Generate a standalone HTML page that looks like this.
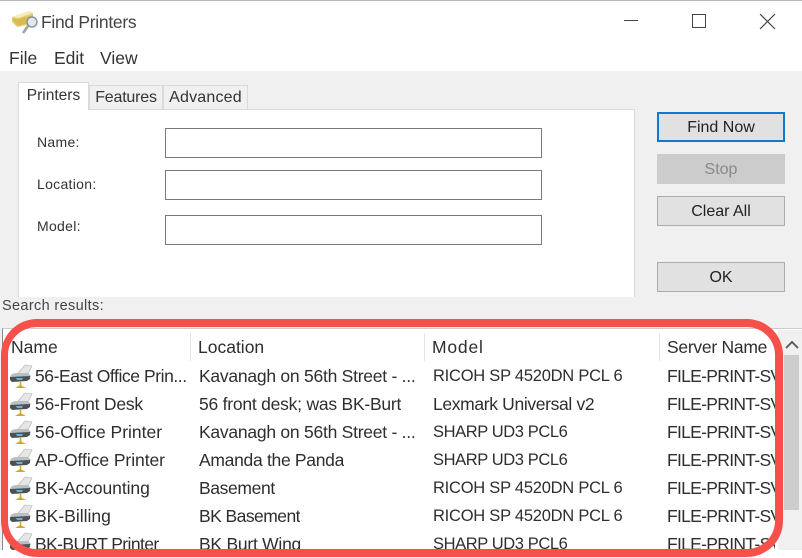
<!DOCTYPE html>
<html>
<head>
<meta charset="utf-8">
<style>
html,body{margin:0;padding:0}
body{width:802px;height:558px;position:relative;overflow:hidden;background:#f0f0f0;font-family:"Liberation Sans",sans-serif;color:#333}
#w{position:absolute;left:0;top:0;width:802px;height:558px;filter:blur(.35px)}
.a{position:absolute;white-space:nowrap}
.btn{position:absolute;left:657px;width:128px;box-sizing:border-box;background:#e1e1e1;border:1px solid #adadad;text-align:center;font-size:16px;color:#222;height:30px;line-height:30px}
.inp{position:absolute;left:165px;width:377px;height:30px;box-sizing:border-box;background:#fff;border:1px solid #7a7a7a}
.lbl{position:absolute;left:37px;font-size:14px;color:#333;line-height:16px;letter-spacing:.3px}
.tab{position:absolute;text-align:center;font-size:16px;box-sizing:border-box;border:1px solid #dadada;border-bottom:0}
.c{position:absolute;font-size:17.5px;line-height:22px;white-space:nowrap;color:#2e2e2e;overflow:hidden}
.sv{left:667px;width:108px;letter-spacing:-.7px}
.rm{font-size:16.5px;letter-spacing:-.24px}
.sh{font-size:16.5px;letter-spacing:-.4px}
.sep{position:absolute;top:333px;width:1px;height:28px;background:#e5e5e5}
</style>
</head>
<body>
<div id="w">
<div class="a" style="left:0;top:0;width:802px;height:71px;background:#fff;border-top:1px solid #bbb;box-sizing:border-box"></div>
<svg class="a" style="left:9px;top:7px" width="32" height="30" viewBox="0 0 32 30">
<path d="M3 10 L20 4 L24 6 L24 17 L8 20 L3 15Z" fill="#e5d27a"/>
<path d="M4 10 L20 4 L23 6 L9 11Z" fill="#f6eebc"/>
<path d="M4 11 L9 12 L24 8 L24 15 L9 19 L4 14Z" fill="#d9bb55"/>
<circle cx="23" cy="15" r="5" fill="#dfe9ef" stroke="#7e8a94" stroke-width="1.3"/>
<path d="M19 19 L14 26" stroke="#a2a2a2" stroke-width="2.5"/>
</svg>
<div class="a" style="left:41px;top:11px;font-size:17.5px;line-height:22px;color:#444;letter-spacing:-.3px">Find Printers</div>
<div class="a" style="left:9px;top:47px;font-size:17.5px;line-height:22px;color:#333">File</div>
<div class="a" style="left:54px;top:47px;font-size:17.5px;line-height:22px;color:#333">Edit</div>
<div class="a" style="left:100px;top:47px;font-size:17.5px;line-height:22px;color:#333">View</div>

<div class="a" style="left:624px;top:20px;width:14px;height:1px;background:#444"></div>
<div class="a" style="left:692px;top:14px;width:14px;height:14px;box-sizing:border-box;border:1px solid #444"></div>
<svg class="a" style="left:759px;top:13px" width="17" height="17" viewBox="0 0 17 17"><path d="M1 1 L16 16 M16 1 L1 16" stroke="#444" stroke-width="1.2" fill="none"/></svg>

<div class="a" style="left:18px;top:109px;width:617px;height:188px;box-sizing:border-box;background:#fff;border:1px solid #dadada;border-bottom:0"></div>
<div class="tab" style="left:89px;top:85px;width:74px;height:24px;line-height:24px;background:#f0f0f0;letter-spacing:-.2px">Features</div>
<div class="tab" style="left:163px;top:85px;width:85px;height:24px;line-height:24px;background:#f0f0f0;letter-spacing:.2px">Advanced</div>
<div class="tab" style="left:18px;top:82px;width:71px;height:28px;line-height:25px;background:#fff;font-size:15.5px">Printers</div>

<div class="lbl" style="top:134px">Name:</div>
<div class="lbl" style="top:176px">Location:</div>
<div class="lbl" style="top:218px">Model:</div>
<div class="inp" style="top:128px"></div>
<div class="inp" style="top:170px"></div>
<div class="inp" style="top:215px"></div>

<div class="btn" style="top:112px;border:2px solid #0f78d0;line-height:28px">Find Now</div>
<div class="btn" style="top:154px;background:#ccc;border-color:#ccc;color:#8a8a8a">Stop</div>
<div class="btn" style="top:196px">Clear All</div>
<div class="btn" style="top:262px">OK</div>

<div class="a" style="left:2px;top:297px;font-size:14.5px;line-height:18px;color:#444;letter-spacing:.35px">Search results:</div>

<div class="a" style="left:2px;top:328px;width:800px;height:230px;background:#fff;border-left:1px solid #888;border-top:1px solid #ccc;box-sizing:border-box"></div>
<div class="sep" style="left:190px"></div>
<div class="sep" style="left:424px"></div>
<div class="sep" style="left:659px"></div>
<div class="c" style="left:11px;top:336px">Name</div>
<div class="c" style="left:198px;top:336px">Location</div>
<div class="c" style="left:432px;top:336px;letter-spacing:.8px">Model</div>
<div class="c" style="left:667px;top:336px;letter-spacing:-.27px">Server Name</div>

<svg width="0" height="0" style="position:absolute"><defs>
<g id="p">
<path d="M9 9 L16 1 L23 2 L19 10Z" fill="#e6e6e6" stroke="#b4b4b4" stroke-width=".6"/>
<path d="M1 13 Q2 9 8 9 L19 9 L22 12 L21 14 L2 15Z" fill="#b9bfc3"/>
<path d="M1 13 L21 12 L21 15 L18 17 L3 18 L1 16Z" fill="#4a5258"/>
<path d="M7 14 L14 14 L13 16 L8 16Z" fill="#6fb0c2"/>
<path d="M11.5 18 L11.5 22" stroke="#d9a520" stroke-width="1.6"/>
<path d="M6 24 L11.5 21 L17 24Z" fill="#d9a520"/>
</g></defs></svg>

<svg class="a" style="left:9px;top:364px" width="24" height="25"><use href="#p"/></svg>
<svg class="a" style="left:9px;top:392px" width="24" height="25"><use href="#p"/></svg>
<svg class="a" style="left:9px;top:420px" width="24" height="25"><use href="#p"/></svg>
<svg class="a" style="left:9px;top:448px" width="24" height="25"><use href="#p"/></svg>
<svg class="a" style="left:9px;top:476px" width="24" height="25"><use href="#p"/></svg>
<svg class="a" style="left:9px;top:504px" width="24" height="25"><use href="#p"/></svg>
<svg class="a" style="left:9px;top:532px" width="24" height="25"><use href="#p"/></svg>

<div class="c" style="left:35px;top:365px;letter-spacing:-.43px">56-East Office Prin...</div>
<div class="c" style="left:199px;top:365px;letter-spacing:-.25px">Kavanagh on 56th Street - ...</div>
<div class="c rm" style="left:433px;top:365px">RICOH SP 4520DN PCL 6</div>
<div class="c sv" style="top:365px">FILE-PRINT-SVR</div>

<div class="c" style="left:35px;top:393px;letter-spacing:-.23px">56-Front Desk</div>
<div class="c" style="left:199px;top:393px;letter-spacing:-.23px">56 front desk; was BK-Burt</div>
<div class="c" style="left:433px;top:393px;letter-spacing:-.35px">Lexmark Universal v2</div>
<div class="c sv" style="top:393px">FILE-PRINT-SVR</div>

<div class="c" style="left:35px;top:421px">56-Office Printer</div>
<div class="c" style="left:199px;top:421px;letter-spacing:-.25px">Kavanagh on 56th Street - ...</div>
<div class="c sh" style="left:433px;top:421px">SHARP UD3 PCL6</div>
<div class="c sv" style="top:421px">FILE-PRINT-SVR</div>

<div class="c" style="left:35px;top:449px;letter-spacing:-.06px">AP-Office Printer</div>
<div class="c" style="left:199px;top:449px;letter-spacing:-.3px">Amanda the Panda</div>
<div class="c sh" style="left:433px;top:449px">SHARP UD3 PCL6</div>
<div class="c sv" style="top:449px">FILE-PRINT-SVR</div>

<div class="c" style="left:35px;top:477px;letter-spacing:-.08px">BK-Accounting</div>
<div class="c" style="left:199px;top:477px;letter-spacing:-.37px">Basement</div>
<div class="c rm" style="left:433px;top:477px">RICOH SP 4520DN PCL 6</div>
<div class="c sv" style="top:477px">FILE-PRINT-SVR</div>

<div class="c" style="left:35px;top:505px">BK-Billing</div>
<div class="c" style="left:199px;top:505px;letter-spacing:-.55px">BK Basement</div>
<div class="c rm" style="left:433px;top:505px">RICOH SP 4520DN PCL 6</div>
<div class="c sv" style="top:505px">FILE-PRINT-SVR</div>

<div class="c" style="left:35px;top:533px;letter-spacing:-.6px">BK-BURT Printer</div>
<div class="c" style="left:199px;top:533px;letter-spacing:-.25px">BK Burt Wing</div>
<div class="c sh" style="left:433px;top:533px">SHARP UD3 PCL6</div>
<div class="c sv" style="top:533px">FILE-PRINT-SVR</div>

<div class="a" style="left:778px;top:330px;width:24px;height:228px;background:#f0f0f0"></div>
<div class="a" style="left:784px;top:355px;width:15px;height:155px;background:#cdcdcd"></div>
<svg class="a" style="left:784px;top:339px" width="16" height="12" viewBox="0 0 16 12"><path d="M2 9 L8 3 L14 9" stroke="#555" stroke-width="1.8" fill="none"/></svg>

<div class="a" style="left:0;top:550px;width:802px;height:8px;background:#fff"></div>
<div class="a" style="left:1px;top:319px;width:782px;height:238px;box-sizing:border-box;border-style:solid;border-color:#f6504a;border-width:8px 8px 8px 7px;border-radius:36px"></div>
</div>
</body>
</html>
